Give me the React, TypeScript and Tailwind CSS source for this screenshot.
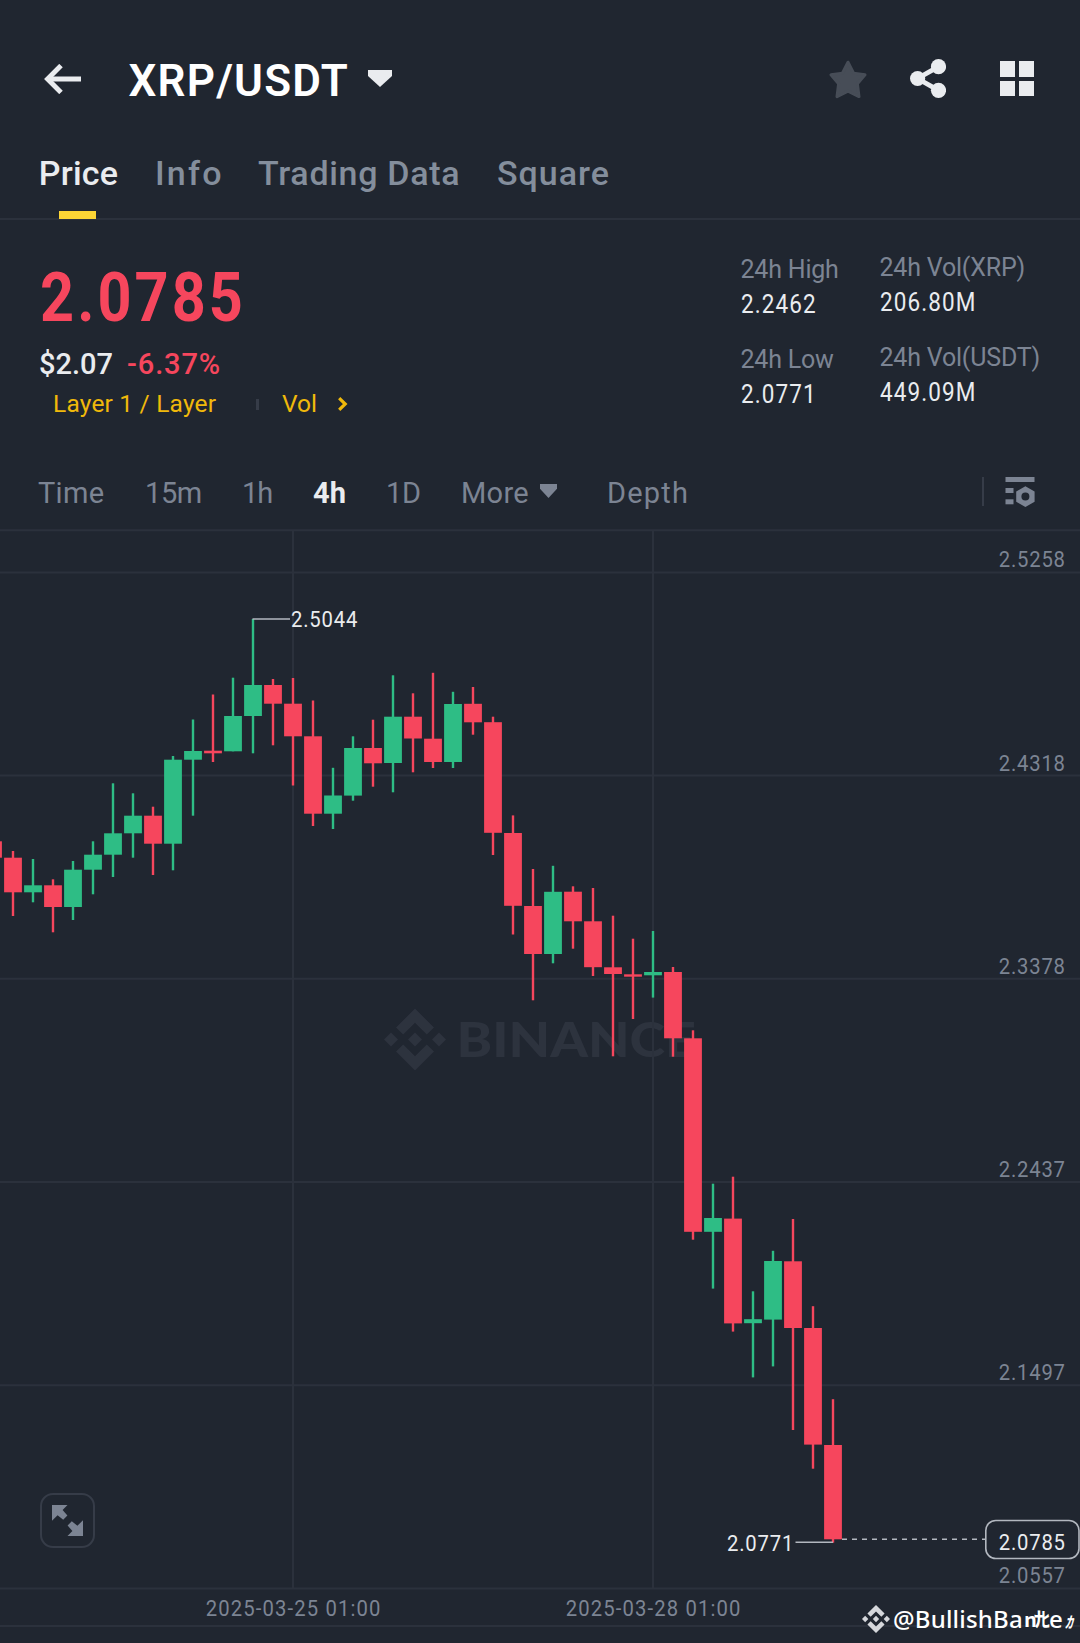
import React from 'react';

type Candle = [up: 0 | 1, high: number, top: number, bottom: number, low: number];

const FIRST_X = -7;
const STEP = 20;

const candles: Candle[] = [
  [0, 841.3, 841.3, 857.7, 857.7],
  [0, 851, 857.7, 892.3, 916],
  [1, 859, 885.3, 892.3, 902.3],
  [0, 879.3, 885.3, 907, 932.3],
  [1, 861, 869.7, 907, 920],
  [1, 841.3, 854.7, 869.7, 894.3],
  [1, 783.3, 833.3, 854.7, 877],
  [1, 793.3, 815.7, 833.3, 857.7],
  [0, 806.7, 815.7, 843.7, 875],
  [1, 756, 759.7, 843.7, 870.3],
  [1, 719.5, 751, 759.7, 815.7],
  [0, 694.5, 750.7, 753.3, 762],
  [1, 677.7, 716, 751.3, 751.3],
  [1, 619, 685, 716, 753.3],
  [0, 679, 685, 703.7, 745.3],
  [0, 678, 703.7, 736.3, 785.5],
  [0, 700.5, 736.3, 813.7, 826],
  [1, 767.8, 795.5, 813.7, 829],
  [1, 736.3, 748, 795.6, 800.7],
  [0, 719.7, 748, 763.3, 786.7],
  [1, 675.3, 716.7, 763, 792.3],
  [0, 693.3, 716.7, 738.5, 772.3],
  [0, 672.8, 738.7, 762, 768],
  [1, 691.8, 704, 762, 768],
  [0, 687, 703.8, 722.3, 734.7],
  [0, 716.7, 722.2, 832.8, 855],
  [0, 815.4, 833, 905.8, 934.5],
  [0, 869, 906, 954, 1000.3],
  [1, 865.8, 891.8, 954, 963.3],
  [0, 886.3, 891.7, 921.3, 948.7],
  [0, 888, 921.3, 967.2, 976],
  [0, 915.7, 967.3, 974, 1056.3],
  [0, 938.7, 974.3, 976.7, 1019],
  [1, 931, 972, 975.3, 997.6],
  [0, 967, 972, 1038.3, 1056.7],
  [0, 1030.3, 1038.3, 1231.8, 1239.7],
  [1, 1183.7, 1218, 1231.8, 1288.6],
  [0, 1176.7, 1218.6, 1323.4, 1331.6],
  [1, 1291.3, 1319.2, 1323.2, 1377.4],
  [1, 1250.8, 1261, 1319.6, 1366.4],
  [0, 1219, 1261.3, 1328, 1430],
  [0, 1306.2, 1328, 1444.6, 1468.7],
  [0, 1399.2, 1445, 1539.3, 1542.7],
];

const priceLevels: [string, number][] = [
  ['2.5258', 572.4],
  ['2.4318', 775.6],
  ['2.3378', 978.8],
  ['2.2437', 1182],
  ['2.1497', 1385.2],
  ['2.0557', 1588.4],
];

const dates: [string, number][] = [
  ['2025-03-25 01:00', 293],
  ['2025-03-28 01:00', 653],
];

function Caret({ className }: { className: string }) {
  return (
    <svg viewBox="0 0 23 17.3" preserveAspectRatio="none" className={className} fill="currentColor">
      <path d="M0 0H23V6L11.5 17.3L0 6Z" />
    </svg>
  );
}

function BinanceMark({ className }: { className: string }) {
  return (
    <svg viewBox="0 0 62 62" className={className} fill="currentColor">
      <path d="M31 0L50 19L42.8 26L31 14.2L19.2 26L12 19Z" />
      <path d="M31 62L50 43L42.8 36L31 47.8L19.2 36L12 43Z" />
      <path d="M31 24L38 31L31 38L24 31Z" />
      <path d="M7 24L14 31L7 38L0 31Z" />
      <path d="M55 24L62 31L55 38L48 31Z" />
    </svg>
  );
}

function Header() {
  return (
    <header className="flex h-[158px] items-center pl-11 pr-[46px] text-[#eaecef]">
      <svg viewBox="0 0 37 30" className="h-[30px] w-[37px]" fill="none" stroke="currentColor">
        <path d="M3.5 15H37" strokeWidth="5.2" />
        <path d="M17 1.6L3.6 15L17 28.4" strokeWidth="5" />
      </svg>
      <h1 className="ml-[47.5px] mt-1 w-[239px] text-[44px] font-semibold leading-none tracking-[1.2px] text-white">
        XRP/USDT
      </h1>
      <Caret className="-mt-px h-[17px] w-[24px]" />
      <div className="ml-auto flex items-center">
        <svg viewBox="0 0 38 39" className="h-[39px] w-[38px] text-[#474d57]" fill="currentColor" stroke="currentColor" strokeWidth="3" strokeLinejoin="round">
          <path d="M19 2.2L24.6 13.2L36 14.8L28.4 23.8L30 36.6L19 31.2L8 36.6L9.6 23.8L2 14.8L13.4 13.2Z" />
        </svg>
        <svg viewBox="0 0 36 39" className="-mt-px ml-[43px] h-[39px] w-9" fill="currentColor">
          <path d="M28.5 7.7L7.6 19.5L28.5 31.3" fill="none" stroke="currentColor" strokeWidth="4.8" />
          <circle cx="28.5" cy="7.7" r="7.6" />
          <circle cx="7.6" cy="19.5" r="7.6" />
          <circle cx="28.5" cy="31.3" r="7.6" />
        </svg>
        <div className="-mt-px ml-[54px] grid grid-cols-2 gap-1">
          <div className="h-4 w-[15px] bg-current" />
          <div className="h-4 w-[15px] bg-current" />
          <div className="h-[15px] w-[15px] bg-current" />
          <div className="h-[15px] w-[15px] bg-current" />
        </div>
      </div>
    </header>
  );
}

function Tabs() {
  return (
    <nav className="flex h-[62px] border-b-2 border-[#2b313c] pl-[39px] text-[34px] font-medium leading-[31px] text-[#848e9c]">
      <div className="w-[116px] text-[#eaecef]">
        <div className="flex w-[77px] flex-col items-center">
          <span className="ml-0.5 tracking-[0.2px]">Price</span>
          <span className="mt-[22px] h-2 w-[37px] bg-[#fcd535]" />
        </div>
      </div>
      <div className="w-[103px] tracking-[2.2px]">Info</div>
      <div className="w-[239px] whitespace-nowrap tracking-[0.7px]">Trading Data</div>
      <div className="tracking-[1px]">Square</div>
    </nav>
  );
}

function Stat({ label, value }: { label: string; value: string }) {
  return (
    <div className="whitespace-nowrap text-[25px] leading-[35px]">
      <div className="tracking-[-0.2px] text-[#7c8493]">{label}</div>
      <div className="origin-left scale-x-[0.9] tracking-[1.2px] text-[#eaecef]">{value}</div>
    </div>
  );
}

function Ticker() {
  return (
    <section className="flex h-60 justify-between pl-[39px]">
      <div className="pt-[43px]">
        <div className="ml-px h-[70px] origin-left scale-x-[0.86] text-[69px] font-bold leading-[70px] tracking-[3.6px] text-[#f6465d]">
          2.0785
        </div>
        <div className="mt-[14px] flex text-[29px] font-medium leading-[34px]">
          <span className="w-[88px] text-[#eaecef]">$2.07</span>
          <span className="tracking-[0.9px] text-[#f6465d]">-6.37%</span>
        </div>
        <div className="mt-[9px] flex items-center text-[24.5px] leading-7 text-[#f0b90b]">
          <span className="ml-3.5 w-[203px] tracking-[0.2px]">Layer 1 / Layer</span>
          <span className="h-[11px] w-[3px] bg-[#363c48]" />
          <span className="ml-[23px] w-14">Vol</span>
          <svg viewBox="0 0 10 14" className="h-3.5 w-2.5" fill="none" stroke="currentColor" strokeWidth="3.2">
            <path d="M1.2 1.2L7.2 7L1.2 12.8" />
          </svg>
        </div>
      </div>
      <div className="flex">
        <div className="flex w-[139px] flex-col gap-5 pt-8">
          <Stat label="24h High" value="2.2462" />
          <Stat label="24h Low" value="2.0771" />
        </div>
        <div className="flex w-[200.5px] flex-col gap-5 pt-[30px]">
          <Stat label="24h Vol(XRP)" value="206.80M" />
          <Stat label="24h Vol(USDT)" value="449.09M" />
        </div>
      </div>
    </section>
  );
}

function Intervals() {
  return (
    <nav className="flex h-[69px] items-start pl-[38px] pr-[45px] pt-4 text-[29px] leading-[34px] text-[#7c8493]">
      <span className="w-[107px] tracking-[0.3px]">Time</span>
      <span className="w-[97px] tracking-[-0.4px]">15m</span>
      <span className="w-[71px] tracking-[-1px]">1h</span>
      <span className="w-[73px] font-bold text-[#eaecef]">4h</span>
      <span className="w-[75px] tracking-[-0.4px]">1D</span>
      <span className="w-[79px] tracking-[0.3px]">More</span>
      <Caret className="mt-2 h-3.5 w-[17px]" />
      <span className="ml-[50px] tracking-[1.2px]">Depth</span>
      <span className="ml-auto mt-px h-[29px] w-[2px] bg-[#363c48]" />
      <svg viewBox="0 0 30 30" className="ml-[21px] mt-px h-[30px] w-[30px]" fill="currentColor">
        <path d="M0.5 0H29.5V5H0.5Z" />
        <path d="M0.5 11H8.5V16H0.5Z" />
        <path d="M0.5 22.3H8.5V27.3H0.5Z" />
        <path fillRule="evenodd" d="M20.4 9.2L29.6 14.4V24.8L20.4 30L11.2 24.8V14.4ZM20.4 15.6A4 4 0 1 0 20.4 23.6A4 4 0 1 0 20.4 15.6Z" />
      </svg>
    </nav>
  );
}

// Slightly condensed label: glyphs are narrowed, spacing fills the given width.
function Label({ x, y, width, children }: { x: number; y: number; width: number; children: string }) {
  return (
    <text transform={`translate(${x} ${y}) scale(0.9 1)`} textLength={width / 0.9}>
      {children}
    </text>
  );
}

function Chart() {
  return (
    <section className="relative h-[1114px] w-full overflow-hidden">
      <svg viewBox="0 529 1080 1114" className="block h-[1114px] w-[1080px]" fontFamily="Roboto, sans-serif" fontSize="22.5">
        <g fill="#2d333e">
          <text x="456.5" y="1056.7" fontFamily="Lato, sans-serif" fontWeight="900" fontSize="47.6" textLength="239.5" lengthAdjust="spacingAndGlyphs">
            BINANCE
          </text>
          <svg x="384" y="1008.5" width="62" height="62" viewBox="0 0 62 62">
            <path d="M31 0L50 19L42.8 26L31 14.2L19.2 26L12 19Z" />
            <path d="M31 62L50 43L42.8 36L31 47.8L19.2 36L12 43Z" />
            <path d="M31 24L38 31L31 38L24 31Z" />
            <path d="M7 24L14 31L7 38L0 31Z" />
            <path d="M55 24L62 31L55 38L48 31Z" />
          </svg>
        </g>

        <g stroke="#2b313c" strokeWidth="2">
          <path d="M0 530.3H1080" />
          {priceLevels.map(([label, y]) => (
            <path key={label} d={`M0 ${y}H1080`} />
          ))}
          <path d="M0 1626H1080" />
          {dates.map(([label, x]) => (
            <path key={label} d={`M${x} 530V1588`} />
          ))}
        </g>

        {candles.map(([up, high, top, bottom, low], i) => {
          const x = FIRST_X + i * STEP;
          return (
            <g key={x} fill={up ? '#2ebd85' : '#f6465d'}>
              <rect x={x - 1.2} y={high} width="2.4" height={low - high} />
              <rect x={x - 8.9} y={top} width="17.8" height={bottom - top} />
            </g>
          );
        })}

        <g stroke="#b2b7bf" strokeWidth="1.6">
          <path d="M252.5 619H290" />
          <path d="M795.5 1542.3H833" />
          <path d="M842 1539.3H985" strokeDasharray="5 5" />
        </g>
        <rect x="985.8" y="1520.5" width="93.2" height="38" rx="10" fill="#202630" stroke="#b2b7bf" strokeWidth="1.6" />

        <g fill="#7c8493">
          {priceLevels.map(([label, y]) => (
            <Label key={label} x={998.7} y={y - 5} width={66.3}>
              {label}
            </Label>
          ))}
          {dates.map(([label, x]) => (
            <Label key={label} x={x - 87.3} y={1616.3} width={174.7}>
              {label}
            </Label>
          ))}
        </g>
        <g fill="#eaecef">
          <Label x={291} y={627.3} width={66.3}>2.5044</Label>
          <Label x={727} y={1551.4} width={66.3}>2.0771</Label>
          <Label x={998.7} y={1550.3} width={66.3}>2.0785</Label>
        </g>
      </svg>

      <button className="absolute left-10 top-[964px] flex size-[55px] items-center justify-center rounded-[13px] border-2 border-[#363c48] text-[#7c8493]">
        <svg viewBox="0 0 31 31" className="size-[31px]" fill="currentColor">
          <path d="M0 0H15.5L10.6 4.9L15.4 10.6L11.2 14.8L5.6 10.2L0 15.8Z" />
          <path d="M31 31H15.5L20.4 26.1L15.6 20.4L19.8 16.2L25.4 20.8L31 15.2Z" />
        </svg>
      </button>

      <div className="absolute left-[862px] top-[1074px] flex h-[32px] items-center whitespace-nowrap text-white">
        <BinanceMark className="size-7 text-[#d5d7db]" />
        <span className="ml-[3px] w-[131px] font-['Noto_Sans'] text-[24px] font-medium leading-8 tracking-[0.2px]">@BullishBa</span>
        <span className="w-[25px] font-['Noto_Sans_CJK_JP'] text-[20px] font-bold leading-8 tracking-[-3px]">nﾅﾋ</span>
        <span className="font-['Noto_Sans'] text-[24px] font-medium leading-8">e</span>
        <span className="ml-0.5 mt-1 font-['Noto_Sans_CJK_JP'] text-[16px] font-bold italic">ｶ</span>
      </div>
    </section>
  );
}

export default function App() {
  return (
    <main className="h-[1643px] w-[1080px] overflow-hidden bg-[#202630] font-[Roboto,sans-serif]">
      <Header />
      <Tabs />
      <Ticker />
      <Intervals />
      <Chart />
    </main>
  );
}
